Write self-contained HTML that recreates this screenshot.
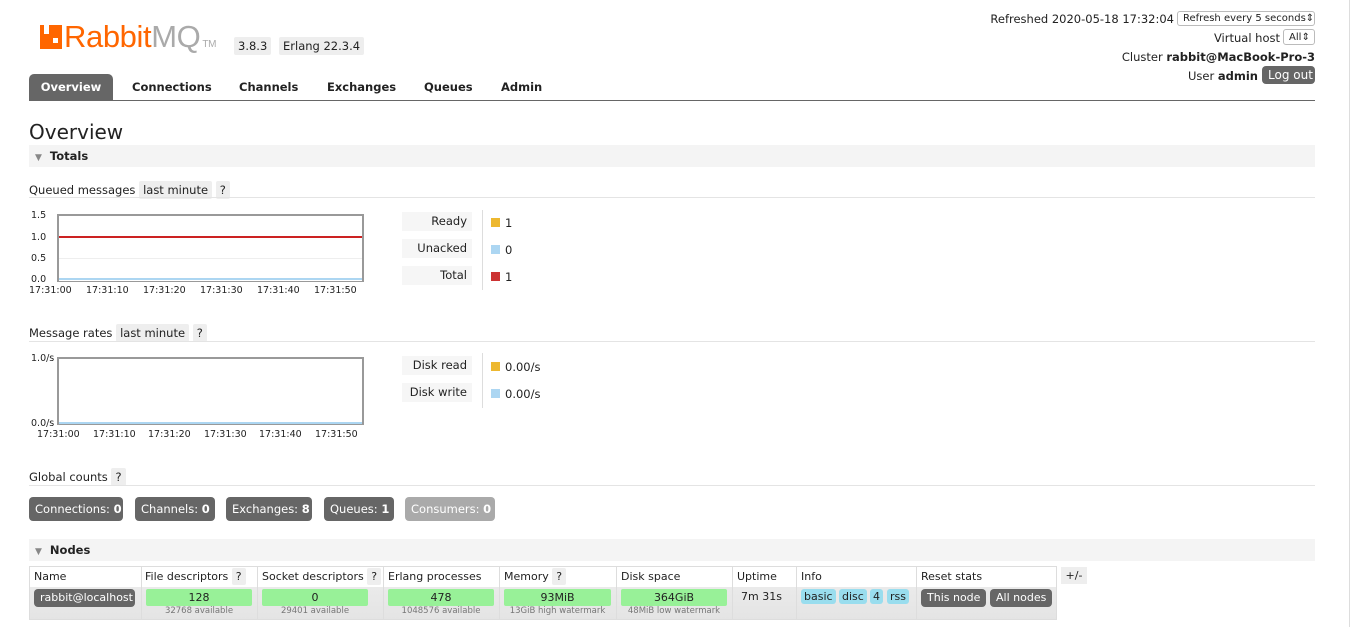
<!DOCTYPE html>
<html><head><meta charset="utf-8"><style>
*{margin:0;padding:0;box-sizing:border-box}
body{width:1358px;height:627px;overflow:hidden;background:#fff;font-family:"DejaVu Sans","Liberation Sans",sans-serif;font-size:11px;color:#222;position:relative}
.a{position:absolute;white-space:nowrap}
.tag{background:#eee;padding:2px 4px;border-radius:2px}
.btn{background:#666;color:#fff;border-radius:4px;height:24px;line-height:24px;padding:0 6px;font-size:11.5px}
.sec{background:#f4f4f4;height:22px}
.hr{height:1px;background:#e4e4e4}
.lg{background:#f6f6f6;width:70px;height:19px;text-align:right;padding-right:5px;line-height:19px;font-size:11.5px}
.sq{width:9px;height:9px}
.g{background:#98f198;border-radius:2px;height:17px;text-align:center;line-height:17px}
.sm{font-size:8.5px;color:#777;text-align:center}
.ax{font-size:9.5px}
.t{position:absolute;font-size:9.5px}
.sel{display:flex;justify-content:space-between;align-items:center;border:1px solid #bbb;border-radius:3px;font-size:10px;padding:0 4px 0 5px}
</style></head><body>
<!-- logo -->
<div class="a" style="left:40px;top:25px;width:22px;height:24px;background:#f60"></div>
<div class="a" style="left:44px;top:25px;width:5px;height:9px;background:#fff"></div>
<div class="a" style="left:53px;top:38px;width:5px;height:5px;background:#fff"></div>
<div class="a" style="left:64px;top:19px;font-family:'Liberation Sans',sans-serif;font-size:31px;color:#f60;letter-spacing:-0.4px">Rabbit<span style="color:#aaa">MQ</span><span style="font-size:10px;color:#aaa;margin-left:2px">TM</span></div>
<div class="a tag" style="left:234px;top:37px;font-size:11.5px">3.8.3</div>
<div class="a tag" style="left:279px;top:37px;font-size:11.5px">Erlang 22.3.4</div>
<!-- right header -->
<div class="a" style="right:184px;top:12px;font-size:11.5px">Refreshed 2020-05-18 17:32:04</div>
<div class="a sel" style="left:1177px;top:11px;width:138px;height:15px"><span>Refresh every 5 seconds</span><span>⇕</span></div>
<div class="a" style="right:78px;top:31px;font-size:11.5px">Virtual host</div>
<div class="a sel" style="left:1283px;top:29px;width:32px;height:16px"><span>All</span><span>⇕</span></div>
<div class="a" style="right:43px;top:50px;font-size:11.5px">Cluster <b>rabbit@MacBook-Pro-3</b></div>
<div class="a" style="right:100px;top:69px;font-size:11.5px">User <b>admin</b></div>
<div class="a btn" style="left:1262px;top:66px;height:18px;line-height:18px;font-size:12px;width:53px">Log out</div>
<div class="a" style="left:1349px;top:0;width:1px;height:627px;background:#ddd"></div>
<!-- nav -->
<div class="a" style="left:29px;top:74px;width:84px;height:27px;background:#666;border-radius:5px 5px 0 0;color:#fff;font-weight:bold;text-align:center;line-height:27px;font-size:11.5px">Overview</div>
<div class="a" style="left:132px;top:80px;font-weight:bold;font-size:11.5px">Connections</div>
<div class="a" style="left:239px;top:80px;font-weight:bold;font-size:11.5px">Channels</div>
<div class="a" style="left:327px;top:80px;font-weight:bold;font-size:11.5px">Exchanges</div>
<div class="a" style="left:424px;top:80px;font-weight:bold;font-size:11.5px">Queues</div>
<div class="a" style="left:501px;top:80px;font-weight:bold;font-size:11.5px">Admin</div>
<div class="a" style="left:29px;top:100px;width:1286px;height:1px;background:#666"></div>
<div class="a" style="left:29px;top:120px;font-size:20px">Overview</div>
<div class="a sec" style="left:29px;top:145px;width:1286px"></div>
<div class="a" style="left:35px;top:149px;font-weight:bold;font-size:11.5px"><span style="color:#888;font-size:9px">▼</span>&nbsp; Totals</div>
<!-- queued -->
<div class="a" style="left:29px;top:183px;font-size:11.5px">Queued messages <span class="tag">last minute</span> <span class="tag">?</span></div>
<div class="a hr" style="left:29px;top:197px;width:1286px"></div>
<div class="a" style="left:57px;top:214px;width:307px;height:68px;border:2px solid #999;border-bottom-width:1px"></div>
<div class="a" style="left:59px;top:236px;width:303px;height:2px;background:#c22"></div>
<div class="a" style="left:59px;top:258px;width:303px;height:1px;background:#eee"></div>
<div class="a" style="left:59px;top:278px;width:303px;height:2px;background:#acd6f2"></div>
<div class="a ax" style="left:31px;top:210px">1.5</div>
<div class="a ax" style="left:31px;top:232px">1.0</div>
<div class="a ax" style="left:31px;top:253px">0.5</div>
<div class="a ax" style="left:31px;top:274px">0.0</div>
<div class="t" style="left:29px;top:285px">17:31:00</div><div class="t" style="left:86px;top:285px">17:31:10</div><div class="t" style="left:143px;top:285px">17:31:20</div><div class="t" style="left:200px;top:285px">17:31:30</div><div class="t" style="left:257px;top:285px">17:31:40</div><div class="t" style="left:314px;top:285px">17:31:50</div>
<div class="a lg" style="left:402px;top:212px">Ready</div>
<div class="a lg" style="left:402px;top:239px">Unacked</div>
<div class="a lg" style="left:402px;top:266px">Total</div>
<div class="a" style="left:482px;top:210px;width:1px;height:80px;background:#ddd"></div>
<div class="a sq" style="left:491px;top:218px;background:#edb830"></div><div class="a" style="left:505px;top:216px;font-size:11.5px">1</div>
<div class="a sq" style="left:491px;top:245px;background:#acd6f2"></div><div class="a" style="left:505px;top:243px;font-size:11.5px">0</div>
<div class="a sq" style="left:491px;top:272px;background:#c33"></div><div class="a" style="left:505px;top:270px;font-size:11.5px">1</div>
<!-- rates -->
<div class="a" style="left:29px;top:326px;font-size:11.5px">Message rates <span class="tag">last minute</span> <span class="tag">?</span></div>
<div class="a hr" style="left:29px;top:341px;width:1286px"></div>
<div class="a" style="left:57px;top:357px;width:307px;height:68px;border:2px solid #999;border-bottom-width:1px"></div>
<div class="a" style="left:59px;top:422px;width:303px;height:2px;background:#acd6f2"></div>
<div class="a ax" style="left:31px;top:353px">1.0/s</div>
<div class="a ax" style="left:31px;top:418px">0.0/s</div>
<div class="t" style="left:37px;top:429px">17:31:00</div><div class="t" style="left:93px;top:429px">17:31:10</div><div class="t" style="left:148px;top:429px">17:31:20</div><div class="t" style="left:204px;top:429px">17:31:30</div><div class="t" style="left:259px;top:429px">17:31:40</div><div class="t" style="left:315px;top:429px">17:31:50</div>
<div class="a lg" style="left:402px;top:356px">Disk read</div>
<div class="a lg" style="left:402px;top:383px">Disk write</div>
<div class="a" style="left:482px;top:353px;width:1px;height:55px;background:#ddd"></div>
<div class="a sq" style="left:491px;top:362px;background:#edb830"></div><div class="a" style="left:505px;top:360px;font-size:11.5px">0.00/s</div>
<div class="a sq" style="left:491px;top:389px;background:#acd6f2"></div><div class="a" style="left:505px;top:387px;font-size:11.5px">0.00/s</div>
<!-- global -->
<div class="a" style="left:29px;top:470px;font-size:11.5px">Global counts <span class="tag">?</span></div>
<div class="a hr" style="left:29px;top:485px;width:1286px"></div>
<div class="a btn" style="left:29px;top:497px;width:94px">Connections: <b>0</b></div>
<div class="a btn" style="left:135px;top:497px;width:80px">Channels: <b>0</b></div>
<div class="a btn" style="left:226px;top:497px;width:86px">Exchanges: <b>8</b></div>
<div class="a btn" style="left:324px;top:497px;width:70px">Queues: <b>1</b></div>
<div class="a btn" style="left:405px;top:497px;width:90px;background:#aaa">Consumers: <b>0</b></div>
<div class="a sec" style="left:29px;top:539px;width:1286px"></div>
<div class="a" style="left:35px;top:543px;font-weight:bold;font-size:11.5px"><span style="color:#888;font-size:9px">▼</span>&nbsp; Nodes</div>
<!-- table -->
<div class="a" style="left:29px;top:566px;width:1028px;height:54px;border:1px solid #ddd;background:linear-gradient(#fff 0,#fff 20px,#eaeaea 20px,#e4e4e4 54px)"></div>
<div class="a" style="left:1061px;top:567px;width:26px;height:17px;background:#eee;text-align:center;line-height:17px;font-size:11px">+/-</div>
<div class="a" style="left:34px;top:570px;font-size:11px">Name</div>
<div class="a" style="left:145px;top:570px;font-size:11px">File descriptors <span class="tag">?</span></div>
<div class="a" style="left:262px;top:570px;font-size:11px">Socket descriptors <span class="tag">?</span></div>
<div class="a" style="left:388px;top:570px;font-size:11px">Erlang processes</div>
<div class="a" style="left:504px;top:570px;font-size:11px">Memory <span class="tag">?</span></div>
<div class="a" style="left:621px;top:570px;font-size:11px">Disk space</div>
<div class="a" style="left:737px;top:570px;font-size:11px">Uptime</div>
<div class="a" style="left:801px;top:570px;font-size:11px">Info</div>
<div class="a" style="left:921px;top:570px;font-size:11px">Reset stats</div>
<div class="a" style="left:141px;top:566px;width:1px;height:54px;background:#ddd"></div>
<div class="a" style="left:257px;top:566px;width:1px;height:54px;background:#ddd"></div>
<div class="a" style="left:383px;top:566px;width:1px;height:54px;background:#ddd"></div>
<div class="a" style="left:499px;top:566px;width:1px;height:54px;background:#ddd"></div>
<div class="a" style="left:616px;top:566px;width:1px;height:54px;background:#ddd"></div>
<div class="a" style="left:732px;top:566px;width:1px;height:54px;background:#ddd"></div>
<div class="a" style="left:796px;top:566px;width:1px;height:54px;background:#ddd"></div>
<div class="a" style="left:916px;top:566px;width:1px;height:54px;background:#ddd"></div>
<div class="a btn" style="left:34px;top:589px;height:18px;line-height:18px;width:101px;font-size:11px">rabbit@localhost</div>
<div class="a g" style="left:146px;top:589px;width:106px">128</div><div class="a sm" style="left:146px;top:606px;width:106px">32768 available</div>
<div class="a g" style="left:262px;top:589px;width:106px">0</div><div class="a sm" style="left:262px;top:606px;width:106px">29401 available</div>
<div class="a g" style="left:388px;top:589px;width:106px">478</div><div class="a sm" style="left:388px;top:606px;width:106px">1048576 available</div>
<div class="a g" style="left:504px;top:589px;width:107px">93MiB</div><div class="a sm" style="left:504px;top:606px;width:107px">13GiB high watermark</div>
<div class="a g" style="left:621px;top:589px;width:106px">364GiB</div><div class="a sm" style="left:621px;top:606px;width:106px">48MiB low watermark</div>
<div class="a" style="left:741px;top:590px;font-size:11px">7m 31s</div>
<div class="a" style="left:801px;top:589px;background:#9de;border-radius:3px;padding:1px 3px;font-size:11px">basic</div>
<div class="a" style="left:839px;top:589px;background:#9de;border-radius:3px;padding:1px 3px;font-size:11px">disc</div>
<div class="a" style="left:870px;top:589px;background:#9de;border-radius:3px;padding:1px 3px;font-size:11px">4</div>
<div class="a" style="left:887px;top:589px;background:#9de;border-radius:3px;padding:1px 3px;font-size:11px">rss</div>
<div class="a btn" style="left:921px;top:589px;height:18px;line-height:18px;font-size:11px">This node</div>
<div class="a btn" style="left:990px;top:589px;height:18px;line-height:18px;font-size:11px">All nodes</div>
</body></html>
